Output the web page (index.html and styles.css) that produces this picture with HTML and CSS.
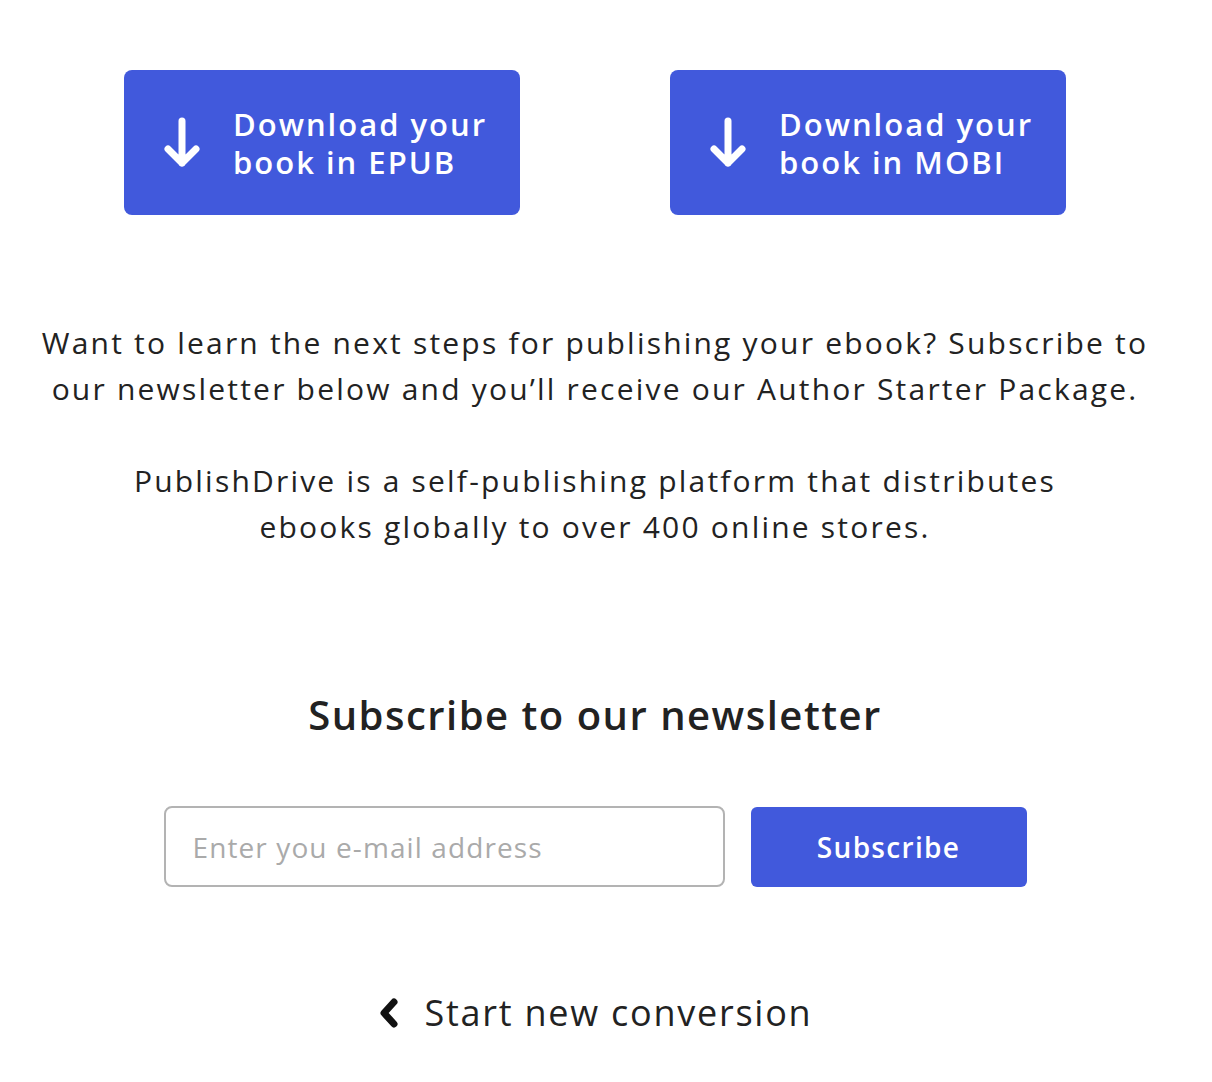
FILE: index.html
```html
<!DOCTYPE html>
<html lang="en">
<head>
  <meta charset="UTF-8">
  <title>Conversion finished</title>
  <link rel="stylesheet" href="styles.css">
</head>
<body>
  <div class="page">
    <div class="downloads">
      <a class="download-btn" href="#">
        <svg class="download-icon" width="36" height="52" viewBox="0 0 36 52">
          <path d="M18 4 V46 M4 32 L18 46 L32 32" fill="none" stroke="#fff" stroke-width="7" stroke-linecap="round" stroke-linejoin="round"/>
        </svg>
        <span>Download your<br>book in EPUB</span>
      </a>
      <a class="download-btn" href="#">
        <svg class="download-icon" width="36" height="52" viewBox="0 0 36 52">
          <path d="M18 4 V46 M4 32 L18 46 L32 32" fill="none" stroke="#fff" stroke-width="7" stroke-linecap="round" stroke-linejoin="round"/>
        </svg>
        <span>Download your<br>book in MOBI</span>
      </a>
    </div>

    <p class="intro">Want to learn the next steps for publishing your ebook? Subscribe to<br>our newsletter below and you’ll receive our Author Starter Package.</p>
    <p class="intro">PublishDrive is a self-publishing platform that distributes<br>ebooks globally to over 400 online stores.</p>

    <h2 class="newsletter-title">Subscribe to our newsletter</h2>
    <form class="newsletter-form">
      <input type="email" placeholder="Enter you e-mail address">
      <button type="submit">Subscribe</button>
    </form>

    <a class="restart" href="#">
      <svg width="22" height="34" viewBox="0 0 22 34">
        <path d="M16 6 L6 17 L16 28" fill="none" stroke="#111" stroke-width="7" stroke-linecap="round" stroke-linejoin="round"/>
      </svg>
      <span>Start new conversion</span>
    </a>
  </div>
</body>
</html>
```

FILE: styles.css
```css
body {
  margin: 0;
  background-color: #fff;
  color: #222;
  font-family: 'Open Sans', 'DejaVu Sans', sans-serif;
}

.page {
  width: 1190px;
  padding-top: 70px;
  display: flex;
  flex-direction: column;
  align-items: center;
}

.downloads {
  display: flex;
  gap: 150px;
  margin-bottom: 105px;
}

.download-btn {
  width: 396px;
  height: 145px;
  box-sizing: border-box;
  padding-left: 40px;
  display: flex;
  align-items: center;
  gap: 33px;
  background-color: #4159dc;
  border-radius: 8px;
  color: #fff;
  text-decoration: none;
  font-size: 31px;
  font-weight: 600;
  line-height: 38px;
  letter-spacing: 2px;
}

.download-icon {
  flex-shrink: 0;
}

.intro {
  margin: 0 0 46px;
  text-align: center;
  font-size: 30px;
  line-height: 46px;
  letter-spacing: 2.2px;
  color: #222;
}

.newsletter-title {
  margin: 93px 0 0;
  font-size: 40px;
  line-height: 52px;
  font-weight: 600;
  letter-spacing: 1.5px;
  color: #222;
}

.newsletter-form {
  display: flex;
  gap: 26px;
  margin-top: 65px;
}

.newsletter-form input {
  width: 561px;
  height: 81px;
  box-sizing: border-box;
  padding: 0 27px;
  border: 2px solid #b3b3b3;
  border-radius: 8px;
  font-family: inherit;
  font-size: 28px;
  letter-spacing: 1.1px;
  color: #222;
}

.newsletter-form input::placeholder {
  color: #aaa;
}

.newsletter-form button {
  width: 276px;
  height: 80px;
  margin-top: 1px;
  border: none;
  border-radius: 6px;
  background-color: #4159dc;
  color: #fff;
  font-family: inherit;
  font-size: 28px;
  font-weight: 600;
  letter-spacing: 1.3px;
  cursor: pointer;
}

.restart {
  margin-top: 104px;
  display: flex;
  align-items: center;
  gap: 25px;
  color: #222;
  text-decoration: none;
  font-size: 36px;
  line-height: 44px;
  letter-spacing: 1.75px;
}
```
